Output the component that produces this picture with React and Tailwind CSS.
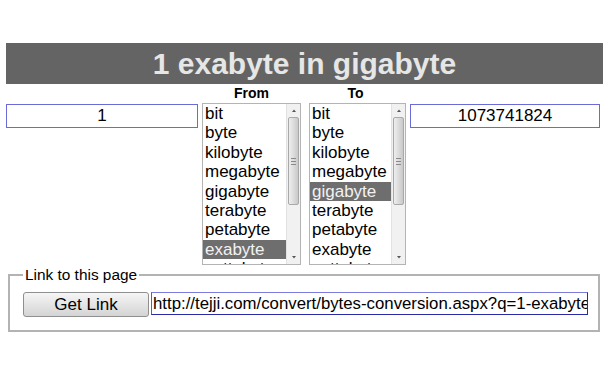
const UNITS = [
  "bit",
  "byte",
  "kilobyte",
  "megabyte",
  "gigabyte",
  "terabyte",
  "petabyte",
  "exabyte",
  "zettabyte",
];

const Scrollbar = () => (
  <div className="w-[14px] h-full bg-[#f1f1f1] border-l border-[#e2e2e2] flex flex-col items-center">
    <svg width="14" height="13" viewBox="0 0 14 13" className="shrink-0">
      <path d="M5 8 L7 5.5 L9 8 Z" fill="#555" />
    </svg>
    <div className="w-[11px] h-[88px] rounded-[2px] border border-[#a9a9a9] bg-gradient-to-r from-[#eeeeee] via-[#dcdcdc] to-[#c8c8c8] flex flex-col items-center justify-center gap-[2px]">
      <div className="w-[5px] h-px bg-[#8a8a8a]" />
      <div className="w-[5px] h-px bg-[#8a8a8a]" />
      <div className="w-[5px] h-px bg-[#8a8a8a]" />
    </div>
    <div className="flex-1" />
    <svg width="14" height="11" viewBox="0 0 14 11" className="shrink-0">
      <path d="M5 3 L7 5.5 L9 3 Z" fill="#555" />
    </svg>
  </div>
);

const UnitList = ({ selected }) => (
  <div className="h-[162px] border border-[#b4b4b4] bg-white flex overflow-hidden">
    <div className="flex-1 overflow-hidden">
      {UNITS.map((u) => (
        <div
          key={u}
          className={
            u === selected
              ? "pl-[2px] leading-[19.4px] h-[19.4px] bg-[#6e6e6e] text-[#f2f2f2]"
              : "pl-[2px] leading-[19.4px] h-[19.4px]"
          }
        >
          {u}
        </div>
      ))}
    </div>
    <Scrollbar />
  </div>
);

export default function App() {
  return (
    <div
      className="w-[612px] h-[383px] bg-white text-black overflow-hidden"
      style={{ fontFamily: '"Liberation Sans", Arial, sans-serif' }}
    >
      <div className="pt-[43px] pl-[6px]">
        <h1 className="w-[597px] h-[41px] bg-[#646464] text-[#e6e6e6] text-[30px] font-bold leading-[41px] text-center">
          1 exabyte in gigabyte
        </h1>

        <div className="grid grid-cols-[192px_99px_97px_194px] gap-x-[4px] text-[17px]">
          <div />
          <div className="h-[19px] text-[14px] font-bold leading-[19px] text-center">From</div>
          <div className="h-[19px] text-[14px] font-bold leading-[19px] text-center ml-[4px]">To</div>
          <div />

          <div className="pt-[1px]">
            <div className="h-[24px] border border-[#6a6ad8] leading-[22px] text-center">1</div>
          </div>
          <UnitList selected="exabyte" />
          <div className="ml-[4px] -mr-[4px]">
            <UnitList selected="gigabyte" />
          </div>
          <div className="pt-[1px] pl-[4px]">
            <div className="h-[24px] border border-[#6a6ad8] leading-[22px] text-center">1073741824</div>
          </div>
        </div>

        <fieldset className="mt-px ml-[2px] w-[592px] border-2 border-[#b3b3b3] pl-[13px] pr-[10px] pb-[13px]">
          <legend className="px-[2px] text-[15.4px] leading-[18px]">Link to this page</legend>
          <div className="flex items-start gap-[2px] mt-[8px] text-[17px]">
            <button className="w-[126px] h-[25px] rounded-[3px] border border-[#8f8f8f] bg-gradient-to-b from-[#f6f6f6] to-[#d4d4d4] leading-[22px] text-center">
              Get Link
            </button>
            <div className="w-[437px] h-[23px] border border-t-[#7b7be0] border-l-[#5a5ad0] border-r-[#2a2aa8] border-b-[#2a2aa8] overflow-hidden whitespace-nowrap leading-[21px] pl-px text-[16.8px]">
              http://tejji.com/convert/bytes-conversion.aspx?q=1-exabyte-in-gigabyte
            </div>
          </div>
        </fieldset>
      </div>
    </div>
  );
}
